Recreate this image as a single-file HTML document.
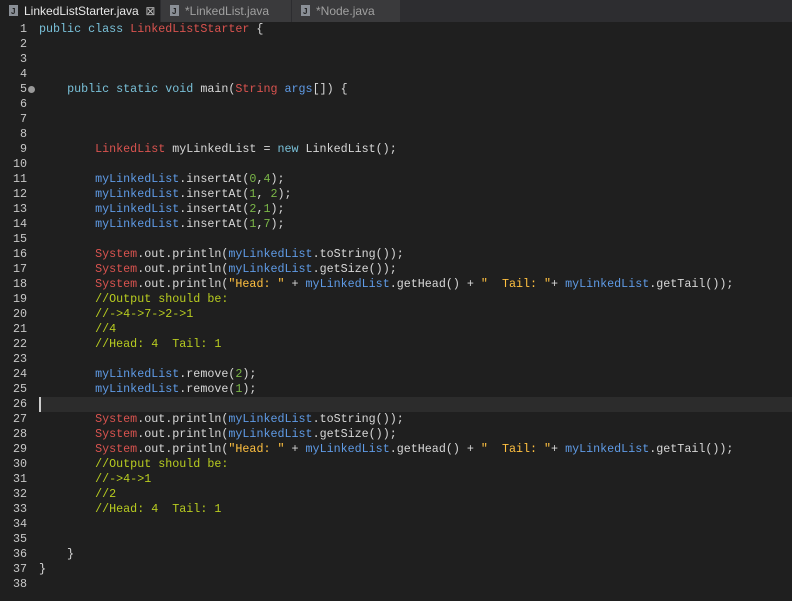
<!DOCTYPE html>
<html><head><style>
body{margin:0;width:792px;height:601px;background:#1f1f1f;overflow:hidden;font-family:"Liberation Mono",monospace;}
.tabs{height:22px;background:#2d2d30;position:relative;font-family:"Liberation Sans",sans-serif;font-size:12px;}
.tab{position:absolute;top:0;height:22px;line-height:22px;color:#a0a0a0;white-space:nowrap;}
.t1{left:0;width:160px;background:#1f1f1f;color:#e8e8e8;}
.ic{display:inline-block;width:9px;height:11px;background:#8a8f96;vertical-align:-1px;margin:0 6px 0 9px;position:relative}
.ic:after{content:"J";position:absolute;left:2px;top:-4px;font-size:8px;color:#1f1f1f;font-weight:bold}
.code{position:absolute;top:22px;left:0;width:792px;font-size:11.7px;line-height:15px;color:#d8d8d8;}
.l{height:15px;position:relative;}
.n{position:absolute;left:0;width:27px;text-align:right;color:#c8c8c8;}
.c{position:absolute;left:39px;white-space:pre;}
.hl{background:#2c2c2c;}
.k{color:#79c0d8}.r{color:#d9534f}.v{color:#5f9be6}.s{color:#ffc040}.g{color:#b8cc20}.m{color:#7ab648}
</style></head><body>
<div class="tabs">
<div class="tab t1"><span class="ic"></span>LinkedListStarter.java &nbsp;<span style="color:#bbb">⊠</span></div>
<div class="tab" style="left:161px;width:130px;background:#3a3a3c"><span class="ic"></span>*LinkedList.java</div>
<div class="tab" style="left:292px;width:108px;background:#3a3a3c"><span class="ic"></span>*Node.java</div>
</div>
<div class="code"><div class="l"><span class="n">1</span><span class="c"><span class="k">public class</span> <span class="r">LinkedListStarter</span> {</span></div><div class="l"><span class="n">2</span></div><div class="l"><span class="n">3</span></div><div class="l"><span class="n">4</span></div><div class="l"><span class="n">5</span><span style="position:absolute;left:28px;top:4px;width:7px;height:7px;border-radius:50%;background:#999"></span><span class="c">    <span class="k">public static void</span> main(<span class="r">String</span> <span class="v">args</span>[]) {</span></div><div class="l"><span class="n">6</span></div><div class="l"><span class="n">7</span></div><div class="l"><span class="n">8</span></div><div class="l"><span class="n">9</span><span class="c">        <span class="r">LinkedList</span> myLinkedList = <span class="k">new</span> LinkedList();</span></div><div class="l"><span class="n">10</span></div><div class="l"><span class="n">11</span><span class="c">        <span class="v">myLinkedList</span>.insertAt(<span class="m">0</span>,<span class="m">4</span>);</span></div><div class="l"><span class="n">12</span><span class="c">        <span class="v">myLinkedList</span>.insertAt(<span class="m">1</span>, <span class="m">2</span>);</span></div><div class="l"><span class="n">13</span><span class="c">        <span class="v">myLinkedList</span>.insertAt(<span class="m">2</span>,<span class="m">1</span>);</span></div><div class="l"><span class="n">14</span><span class="c">        <span class="v">myLinkedList</span>.insertAt(<span class="m">1</span>,<span class="m">7</span>);</span></div><div class="l"><span class="n">15</span></div><div class="l"><span class="n">16</span><span class="c">        <span class="r">System</span>.out.println(<span class="v">myLinkedList</span>.toString());</span></div><div class="l"><span class="n">17</span><span class="c">        <span class="r">System</span>.out.println(<span class="v">myLinkedList</span>.getSize());</span></div><div class="l"><span class="n">18</span><span class="c">        <span class="r">System</span>.out.println(<span class="s">"Head: "</span> + <span class="v">myLinkedList</span>.getHead() + <span class="s">"  Tail: "</span>+ <span class="v">myLinkedList</span>.getTail());</span></div><div class="l"><span class="n">19</span><span class="c g">        //Output should be:</span></div><div class="l"><span class="n">20</span><span class="c g">        //-&gt;4-&gt;7-&gt;2-&gt;1</span></div><div class="l"><span class="n">21</span><span class="c g">        //4</span></div><div class="l"><span class="n">22</span><span class="c g">        //Head: 4  Tail: 1</span></div><div class="l"><span class="n">23</span></div><div class="l"><span class="n">24</span><span class="c">        <span class="v">myLinkedList</span>.remove(<span class="m">2</span>);</span></div><div class="l"><span class="n">25</span><span class="c">        <span class="v">myLinkedList</span>.remove(<span class="m">1</span>);</span></div><div class="l hl"><span class="n" style="background:#1f1f1f;height:15px">26</span><span style="position:absolute;left:27px;top:0;width:12px;height:15px;background:#1f1f1f"></span><span style="position:absolute;left:39px;top:0;width:2px;height:15px;background:#ccc"></span></div><div class="l"><span class="n">27</span><span class="c">        <span class="r">System</span>.out.println(<span class="v">myLinkedList</span>.toString());</span></div><div class="l"><span class="n">28</span><span class="c">        <span class="r">System</span>.out.println(<span class="v">myLinkedList</span>.getSize());</span></div><div class="l"><span class="n">29</span><span class="c">        <span class="r">System</span>.out.println(<span class="s">"Head: "</span> + <span class="v">myLinkedList</span>.getHead() + <span class="s">"  Tail: "</span>+ <span class="v">myLinkedList</span>.getTail());</span></div><div class="l"><span class="n">30</span><span class="c g">        //Output should be:</span></div><div class="l"><span class="n">31</span><span class="c g">        //-&gt;4-&gt;1</span></div><div class="l"><span class="n">32</span><span class="c g">        //2</span></div><div class="l"><span class="n">33</span><span class="c g">        //Head: 4  Tail: 1</span></div><div class="l"><span class="n">34</span></div><div class="l"><span class="n">35</span></div><div class="l"><span class="n">36</span><span class="c">    }</span></div><div class="l"><span class="n">37</span><span class="c">}</span></div><div class="l"><span class="n">38</span></div></div>
</body></html>
